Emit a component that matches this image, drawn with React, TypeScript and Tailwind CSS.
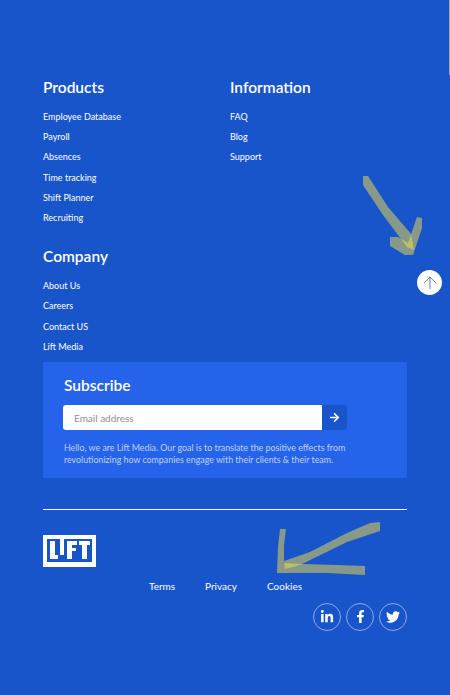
import { ArrowRight, ArrowUp } from "lucide-react";
import { FaFacebookF, FaLinkedinIn, FaTwitter } from "react-icons/fa";

const products = ["Employee Database", "Payroll", "Absences", "Time tracking", "Shift Planner", "Recruiting"];
const information = ["FAQ", "Blog", "Support"];
const company = ["About Us", "Careers", "Contact US", "Lift Media"];

function LinkColumn({ title, links }: { title: string; links: string[] }) {
  return (
    <div>
      <h4 className="text-[15.5px] leading-[22px] font-semibold text-white">{title}</h4>
      <ul className="mt-[9px] flex flex-col">
        {links.map((link) => (
          <li key={link} className="h-[20.2px] text-[9px] leading-[20px] text-white">
            {link}
          </li>
        ))}
      </ul>
    </div>
  );
}

function LiftLogo() {
  return (
    <svg width="53" height="32" viewBox="0 0 53 32" fill="#fff">
      <path fillRule="evenodd" d="M0 0h53v32H0zM4 4v23h45V4z" />
      <path d="M7 6h5v14h3v4H7z" />
      <path d="M17 4h4v16h-4z" />
      <path d="M24 6h10v4h-5v3h4v3h-4v8h-5z" />
      <path d="M36 6h11v4h-3v14h-5V10h-3z" />
    </svg>
  );
}

export default function App() {
  return (
    <div className="relative h-[695px] w-[450px] overflow-hidden bg-[#1855cb] font-['Lato',sans-serif]">
      <footer className="px-[43px] pt-[76px]">
        <div className="grid grid-cols-[187px_1fr]">
          <LinkColumn title="Products" links={products} />
          <LinkColumn title="Information" links={information} />
        </div>
        <div className="mt-[17px]">
          <LinkColumn title="Company" links={company} />
        </div>

        <div className="mt-[5px] h-[116px] bg-[#2563eb] pl-[20px] pr-[21px] pt-[12px]">
          <h5 className="pl-px text-[15.5px] leading-[22px] font-semibold text-white">Subscribe</h5>
          <form className="mt-[9px] flex h-[25px] w-[284px]">
            <div className="flex flex-1 items-center rounded-l-[3px] bg-white pl-[11px] pt-[2px] text-[10px] text-[#8a919e]">
              Email address
            </div>
            <button type="button" className="flex w-[25px] items-center justify-center rounded-r-[3px] bg-[#1855cb]">
              <ArrowRight size={13} strokeWidth={3} color="#fff" />
            </button>
          </form>
          <p className="mt-[12px] pl-px text-[8.85px] leading-[12px] text-[#bfd0fb]">
            Hello, we are Lift Media. Our goal is to translate the positive effects from revolutionizing how companies engage with their clients &amp; their team.
          </p>
        </div>

        <div className="mt-[31px] h-px bg-white" />

        <div className="mt-[25px] flex">
          <LiftLogo />
        </div>

        <nav className="mt-[12px] flex pl-[106px] text-[10px] leading-[14px] text-white">
          <span className="w-[56px]">Terms</span>
          <span className="w-[62px]">Privacy</span>
          <span>Cookies</span>
        </nav>

        <div className="mt-[10px] flex justify-end gap-[5px]">
          <a className="flex h-[28px] w-[28px] items-center justify-center rounded-full border border-[#8fa9e6] text-white">
            <FaLinkedinIn size={14} />
          </a>
          <a className="flex h-[28px] w-[28px] items-center justify-center rounded-full border border-[#8fa9e6] text-white">
            <FaFacebookF size={13} />
          </a>
          <a className="flex h-[28px] w-[28px] items-center justify-center rounded-full border border-[#8fa9e6] text-white">
            <FaTwitter size={14} />
          </a>
        </div>
      </footer>

      {/* page scrollbar sliver */}
      <div className="absolute right-0 top-0 h-[75px] w-px bg-[#9aa5b8]" />

      {/* back to top */}
      <button type="button" className="absolute left-[417px] top-[270px] flex h-[25px] w-[25px] items-center justify-center rounded-full bg-white">
        <ArrowUp size={20} strokeWidth={1} color="#3a66bd" />
      </button>

      {/* marker scribbles on top of the screenshot */}
      <svg className="pointer-events-none absolute left-0 top-0" width="450" height="695" fill="#f5e04a" fillOpacity="0.5">
        <path d="M363 176L368 176L388 207L411 234L414 250L407 247L383 215L363 185Z" />
        <path d="M390 237L398 237L408 243L417 217L422 218L422 228L413 255L405 255L390 246Z" />
        <path d="M380 522L380 531L347 542L300 565L285 569L284 561L310 552L347 533L370 523Z" />
        <path d="M280 529L286 529L284 545L284 563L303 564L337 565L365 566L365 575L327 573L293 573L277 573L278 547Z" />
      </svg>
    </div>
  );
}
